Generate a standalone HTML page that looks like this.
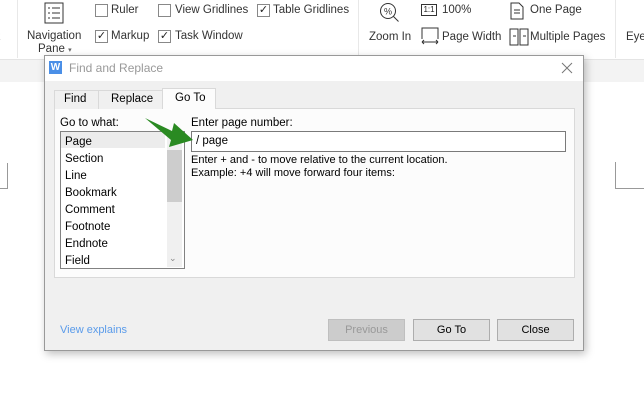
<!DOCTYPE html>
<html><head><meta charset="utf-8"><style>
*{box-sizing:border-box;margin:0;padding:0}
body{width:644px;height:412px;position:relative;overflow:hidden;background:#fff;font-family:"Liberation Sans","DejaVu Sans",sans-serif;font-size:11px;color:#222}
.a{position:absolute}
.cb{position:absolute;width:13px;height:13px;border:1px solid #888;background:#fff;font-size:11px;line-height:11px;text-align:center;color:#222}
.t{position:absolute;font-size:11.5px;color:#333;white-space:nowrap}
.btn{position:absolute;height:22px;border:1px solid #adadad;background:#e1e1e1;text-align:center;line-height:20px;font-size:11px;color:#000}
.rb{position:absolute;left:0;top:2px;width:644px;height:58px}
</style></head><body>
<div class="a" style="left:0;top:0;width:644px;height:60px;background:#fff;border-bottom:1px solid #e4e4e4"></div>
<div class="a" style="left:0;top:60px;width:644px;height:22px;background:#f3f3f3"></div>
<div class="a" style="left:17px;top:0;width:1px;height:58px;background:#e8e8e8"></div>
<div class="a" style="left:358px;top:0;width:1px;height:58px;background:#e8e8e8"></div>
<div class="a" style="left:615px;top:0;width:1px;height:58px;background:#e8e8e8"></div>
<div class="rb">
<div class="t" style="left:-3px;top:29px">t</div>
<svg class="a" style="left:44px;top:0px" width="20" height="22" viewBox="0 0 20 22"><rect x="1" y="1" width="18" height="20" fill="none" stroke="#333"/><path d="M4 6h2M8 6h8M4 11h2M8 11h8M4 16h2M8 16h8" stroke="#333"/></svg>
<div class="t" style="left:27px;top:28px">Navigation</div>
<div class="t" style="left:38px;top:41px">Pane <span style="font-size:7px;color:#666">▾</span></div>
<div class="cb" style="left:95px;top:2px"></div><div class="t" style="left:111px;top:2px">Ruler</div>
<div class="cb" style="left:158px;top:2px"></div><div class="t" style="left:175px;top:2px">View Gridlines</div>
<div class="cb" style="left:257px;top:2px">✓</div><div class="t" style="left:273px;top:2px">Table Gridlines</div>
<div class="cb" style="left:95px;top:28px">✓</div><div class="t" style="left:111px;top:28px">Markup</div>
<div class="cb" style="left:158px;top:28px">✓</div><div class="t" style="left:175px;top:28px">Task Window</div>
<svg class="a" style="left:379px;top:0px" width="22" height="22" viewBox="0 0 22 22"><circle cx="9" cy="9" r="7.5" fill="none" stroke="#333"/><path d="M14.5 14.5l5 5" stroke="#333"/><text x="9" y="12.5" font-size="9" text-anchor="middle" font-family="Liberation Sans" fill="#333">%</text></svg>
<div class="t" style="left:369px;top:29px">Zoom In</div>
<div class="a" style="left:421px;top:2px;width:16px;height:12px;border:1px solid #333;font-size:8px;line-height:10px;text-align:center">1:1</div>
<div class="t" style="left:442px;top:2px">100%</div>
<svg class="a" style="left:421px;top:25px" width="18" height="18" viewBox="0 0 18 18"><path d="M1 12V1h16v11" fill="none" stroke="#333"/><path d="M1 15h16M1 15l2-2M1 15l2 2M17 15l-2-2M17 15l-2 2" stroke="#333" fill="none"/></svg>
<div class="t" style="left:442px;top:29px">Page Width</div>
<svg class="a" style="left:510px;top:0px" width="14" height="18" viewBox="0 0 14 18"><path d="M1 1h8l4 4v12H1z" fill="none" stroke="#333"/><path d="M4 8h6M4 11h6" stroke="#333"/></svg>
<div class="t" style="left:530px;top:2px">One Page</div>
<svg class="a" style="left:509px;top:26px" width="20" height="18" viewBox="0 0 20 18"><rect x="1" y="1" width="8" height="16" fill="none" stroke="#333"/><rect x="11" y="1" width="8" height="16" fill="none" stroke="#333"/><path d="M4 8h3M14 8h3" stroke="#333"/></svg>
<div class="t" style="left:530px;top:29px">Multiple Pages</div>
<div class="t" style="left:626px;top:29px">Eye</div>
</div>
<div class="a" style="left:7px;top:163px;width:1px;height:25px;background:#999"></div>
<div class="a" style="left:0;top:188px;width:8px;height:1px;background:#999"></div>
<div class="a" style="left:615px;top:162px;width:1px;height:26px;background:#999"></div>
<div class="a" style="left:615px;top:188px;width:29px;height:1px;background:#999"></div>
<div class="a" style="left:44px;top:55px;width:540px;height:296px;background:#f0f0f0;border:1px solid #999;box-shadow:2px 3px 8px rgba(0,0,0,.25)"></div>
<div class="a" style="left:45px;top:56px;width:538px;height:25px;background:#fff"></div>
<div class="a" style="left:49px;top:61px;width:13px;height:13px;background:#4a8fe7;color:#fff;font-size:10px;line-height:13px;text-align:center;font-weight:bold">W</div>
<div class="t" style="left:69px;top:61px;color:#999;font-size:12px">Find and Replace</div>
<svg class="a" style="left:561px;top:62px" width="12" height="12"><path d="M1 1l10 10M11 1L1 11" stroke="#777"/></svg>
<div class="a" style="left:54px;top:108px;width:521px;height:170px;background:#fcfcfc;border:1px solid #d9d9d9"></div>
<div class="a" style="left:54px;top:90px;width:45px;height:19px;border:1px solid #d9d9d9;border-bottom:none;background:#f0f0f0"></div>
<div class="t" style="left:64px;top:93px;color:#000">Find</div>
<div class="a" style="left:98px;top:90px;width:65px;height:19px;border:1px solid #d9d9d9;border-bottom:none;background:#f0f0f0"></div>
<div class="t" style="left:111px;top:93px;color:#000">Replace</div>
<div class="a" style="left:162px;top:88px;width:54px;height:21px;border:1px solid #d9d9d9;border-bottom:none;background:#fcfcfc"></div>
<div class="t" style="left:175px;top:92px;color:#000">Go To</div>
<div class="t" style="left:60px;top:117px;color:#000">Go to what:</div>
<div class="a" style="left:60px;top:131px;width:125px;height:138px;border:1px solid #828282;background:#fff"></div>
<div class="a" style="left:61px;top:132px;width:104px;height:16px;background:#ececec"></div>
<div class="a" style="left:167px;top:132px;width:15px;height:135px;background:#f0f0f0"></div>
<div class="a" style="left:167px;top:150px;width:15px;height:52px;background:#cdcdcd"></div>
<div class="a" style="left:169px;top:134px;font-size:9px;color:#888">⌃</div>
<div class="a" style="left:169px;top:253px;font-size:9px;color:#888">⌄</div>
<div class="a" style="left:65px;top:134px;line-height:17px;font-size:11.5px;color:#000">Page<br>Section<br>Line<br>Bookmark<br>Comment<br>Footnote<br>Endnote<br>Field</div>
<div class="t" style="left:191px;top:117px;color:#000">Enter page number:</div>
<div class="a" style="left:191px;top:131px;width:375px;height:21px;border:1px solid #7a7a7a;background:#fff"></div>
<div class="t" style="left:196px;top:135px;color:#000">/ page</div>
<div class="t" style="left:191px;top:154px;color:#000;font-size:11px">Enter + and - to move relative to the current location.</div>
<div class="t" style="left:191px;top:167px;color:#000;font-size:11px">Example: +4 will move forward four items:</div>
<svg class="a" style="left:140px;top:113px" width="60" height="38"><path d="M5 5 L32 18 L34 10 L53 27 L29 34 L31 27 Z" fill="#2a8a22"/></svg>
<div class="t" style="left:60px;top:324px;color:#5a9bea;font-size:11px">View explains</div>
<div class="btn" style="left:328px;top:319px;width:77px;background:#ccc;border-color:#bfbfbf;color:#999">Previous</div>
<div class="btn" style="left:413px;top:319px;width:77px">Go To</div>
<div class="btn" style="left:497px;top:319px;width:77px">Close</div>
</body></html>
